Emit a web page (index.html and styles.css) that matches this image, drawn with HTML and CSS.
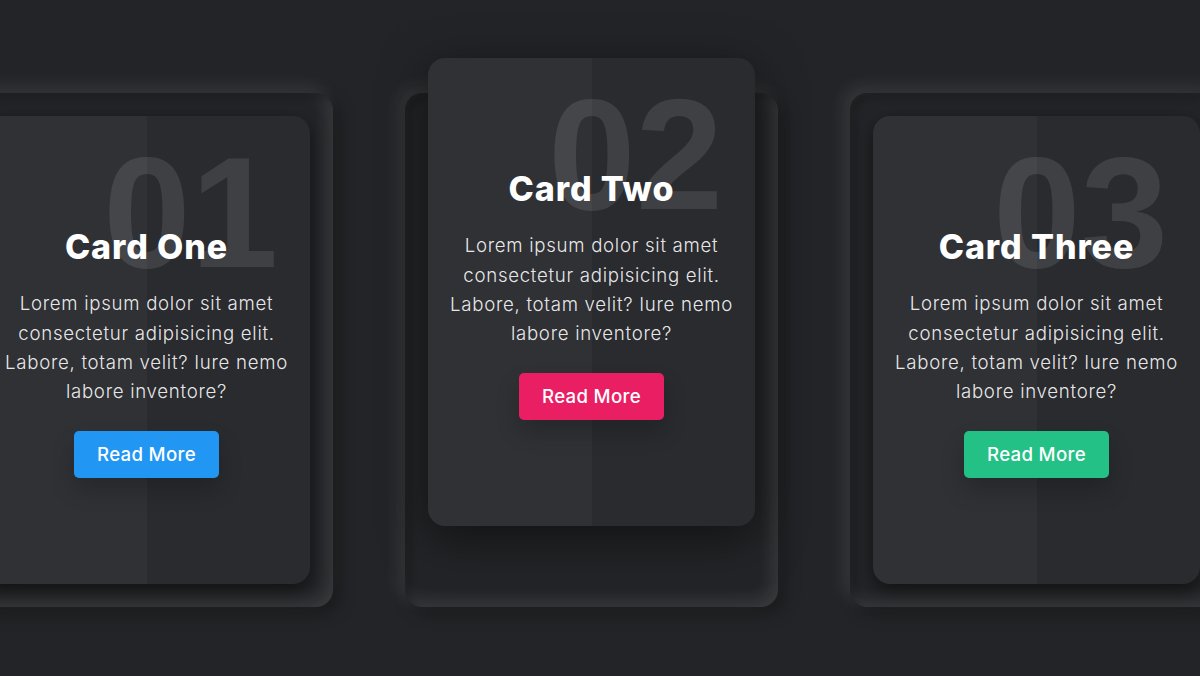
FILE: index.html
```html
<!DOCTYPE html>
<html lang="en">
<head>
<meta charset="utf-8">
<title>Cards</title>
<link rel="stylesheet" href="styles.css">
</head>
<body>
  <main class="container">
    <div class="card">
      <div class="box">
        <div class="content">
          <h2 class="num">01</h2>
          <h3 class="title">Card One</h3>
          <p class="text">Lorem ipsum dolor sit amet<br>consectetur adipisicing elit.<br>Labore, totam velit? Iure nemo<br>labore inventore?</p>
          <a class="btn btn-blue" href="#">Read More</a>
        </div>
      </div>
    </div>
    <div class="card card-active">
      <div class="box">
        <div class="content">
          <h2 class="num">02</h2>
          <h3 class="title">Card Two</h3>
          <p class="text">Lorem ipsum dolor sit amet<br>consectetur adipisicing elit.<br>Labore, totam velit? Iure nemo<br>labore inventore?</p>
          <a class="btn btn-pink" href="#">Read More</a>
        </div>
      </div>
    </div>
    <div class="card">
      <div class="box">
        <div class="content">
          <h2 class="num">03</h2>
          <h3 class="title">Card Three</h3>
          <p class="text">Lorem ipsum dolor sit amet<br>consectetur adipisicing elit.<br>Labore, totam velit? Iure nemo<br>labore inventore?</p>
          <a class="btn btn-green" href="#">Read More</a>
        </div>
      </div>
    </div>
  </main>
</body>
</html>
```
FILE: styles.css
```css
* {
  margin: 0;
  padding: 0;
  box-sizing: border-box;
}

body {
  background: #232427;
  font-family: Inter, "Open Sans", sans-serif;
  height: 676px;
  overflow: hidden;
}

.container {
  display: flex;
  justify-content: center;
  gap: 72px;
  padding: 93px 17px 0 0;
}

/* outer neumorphic well */
.card {
  position: relative;
  flex: 0 0 373px;
  height: 514px;
  border-radius: 17px;
  box-shadow:
    inset 6px 6px 6px rgba(0, 0, 0, 0.2),
    inset -6px -6px 17px rgba(255, 255, 255, 0.1),
    6px 6px 17px rgba(0, 0, 0, 0.3),
    -6px -6px 17px rgba(255, 255, 255, 0.1);
}

/* raised panel inside the well */
.box {
  position: absolute;
  inset: 23px;
  background: #2a2b2f;
  border-radius: 17px;
  box-shadow: 0 6px 17px rgba(0, 0, 0, 0.5);
  display: flex;
  align-items: center;
  justify-content: center;
}

.box::before {
  content: "";
  position: absolute;
  top: 0;
  left: 0;
  width: 50%;
  height: 100%;
  border-radius: 17px 0 0 17px;
  background: rgba(255, 255, 255, 0.03);
  pointer-events: none;
}

.card-active .box {
  transform: translateY(-58px);
  box-shadow: 0 12px 47px rgba(0, 0, 0, 0.5);
}

.content {
  display: flex;
  flex-direction: column;
  align-items: center;
  padding: 23px;
  text-align: center;
}

/* large faded card number behind the title */
.num {
  position: absolute;
  top: 18px;
  right: 32px;
  font-family: "Liberation Sans", Arial, sans-serif;
  font-size: 157px;
  line-height: 1;
  font-weight: 700;
  color: rgba(255, 255, 255, 0.1);
}

.title {
  position: relative;
  font-size: 34px;
  line-height: 50px;
  font-weight: 800;
  letter-spacing: 0.9px;
  color: #fff;
  margin-bottom: 17px;
}

.text {
  position: relative;
  font-size: 18.66px;
  line-height: 29.3px;
  font-weight: 300;
  letter-spacing: 0.7px;
  color: rgba(255, 255, 255, 0.9);
  white-space: nowrap;
}

.btn {
  position: relative;
  display: block;
  margin-top: 24px;
  padding: 0 23px;
  height: 47px;
  line-height: 47px;
  font-size: 18.66px;
  font-weight: 500;
  letter-spacing: 0.3px;
  color: #fff;
  text-decoration: none;
  border-radius: 5px;
  box-shadow: 0 12px 23px rgba(0, 0, 0, 0.2);
}

.btn-blue { background: #2196f3; }
.btn-pink { background: #e91e63; }
.btn-green { background: #23c186; }
```
